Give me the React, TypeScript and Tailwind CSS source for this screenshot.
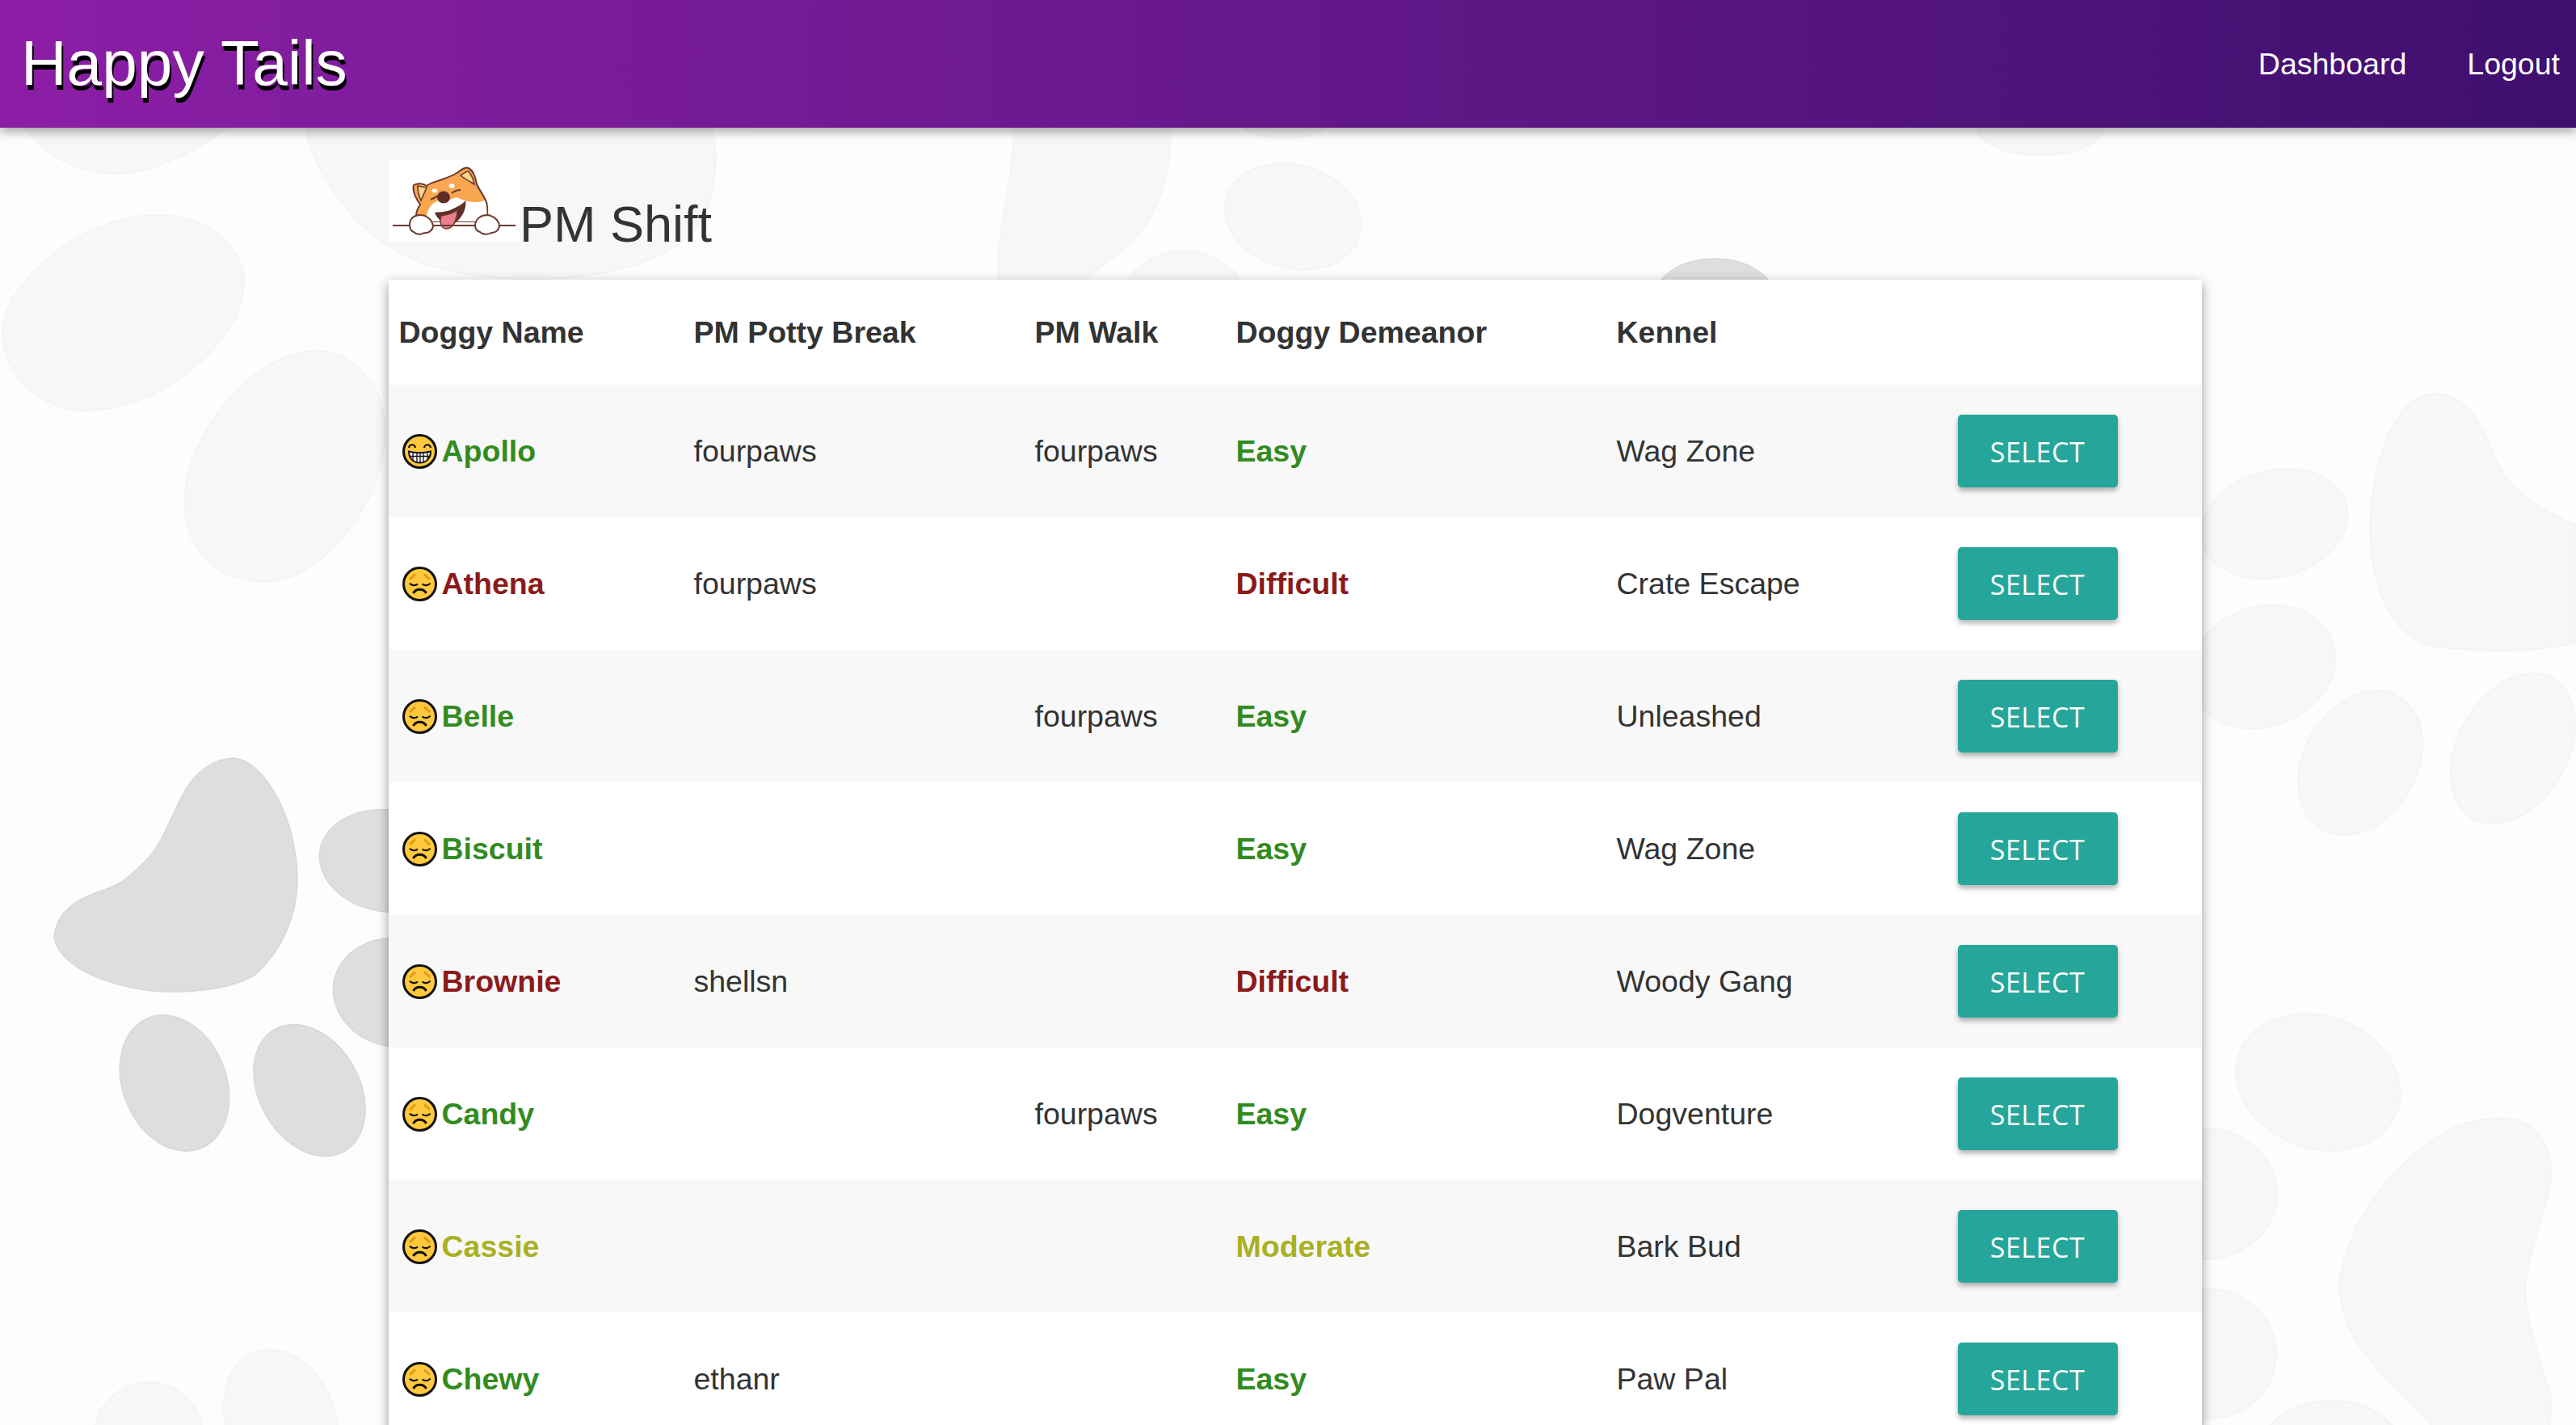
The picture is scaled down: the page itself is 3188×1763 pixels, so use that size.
import React from "react";

type Row = { name: string; potty: string; walk: string; demeanor: "Easy" | "Difficult" | "Moderate"; kennel: string; happy?: boolean };

const rows: Row[] = [
  { name: "Apollo", potty: "fourpaws", walk: "fourpaws", demeanor: "Easy", kennel: "Wag Zone", happy: true },
  { name: "Athena", potty: "fourpaws", walk: "", demeanor: "Difficult", kennel: "Crate Escape" },
  { name: "Belle", potty: "", walk: "fourpaws", demeanor: "Easy", kennel: "Unleashed" },
  { name: "Biscuit", potty: "", walk: "", demeanor: "Easy", kennel: "Wag Zone" },
  { name: "Brownie", potty: "shellsn", walk: "", demeanor: "Difficult", kennel: "Woody Gang" },
  { name: "Candy", potty: "", walk: "fourpaws", demeanor: "Easy", kennel: "Dogventure" },
  { name: "Cassie", potty: "", walk: "", demeanor: "Moderate", kennel: "Bark Bud" },
  { name: "Chewy", potty: "ethanr", walk: "", demeanor: "Easy", kennel: "Paw Pal" },
];

const tone: Record<Row["demeanor"], string> = {
  Easy: "text-[#338b1f]",
  Difficult: "text-[#8b1a1a]",
  Moderate: "text-[#a8b023]",
};

function Emoji({ happy }: { happy?: boolean }) {
  return (
    <svg viewBox="0 0 43 43" className="w-[43px] h-[43px] shrink-0 mr-[6px]">
      <circle cx="21.5" cy="21.5" r="20" fill="#ffc83d" stroke="#111" strokeWidth="3" />
      {happy ? (
        <g>
          <path d="M8 17c1-5 7-5 8 0M27 17c1-5 7-5 8 0" fill="none" stroke="#111" strokeWidth="2.2" />
          <path d="M8 21.5c8 2 19 2 27 0c0 9-6 14-13.500 14S8 30.500 8 21.500z" fill="#fff" stroke="#111" strokeWidth="2" />
          <path d="M13 23v10M18 24v11M22 24v12M26 24v11M31 23v9M9 27.500h25" stroke="#111" strokeWidth="1.300" fill="none" />
        </g>
      ) : (
        <g>
          <path d="M9 16L16 9.500M34 16L27 9.500" stroke="#e0991c" strokeWidth="3" fill="none" />
          <path d="M9 20.500c2 3 7 3.500 10 1M24.500 21.500c3 2.500 8 2 10-1" stroke="#111" strokeWidth="2.200" fill="none" />
          <path d="M13.500 33c3-6.500 13-6.500 16 0" stroke="#111" strokeWidth="3" fill="none" />
        </g>
      )}
    </svg>
  );
}

function Dog() {
  const o = "#6b3a2e";
  return (
    <svg viewBox="0 0 162 101" className="inline-block align-baseline w-[162px] h-[101px] bg-white">
      <path d="M34 70C34 60 38 58 39 55C34 48 29 38 31 31C36 28 43 29 47 32C53 27 62 26 66 24C72 22 80 19 86 15C90 12 95 8 99 10C105 13 108 24 109 30C112 37 118 44 121 52C123 60 122 68 122 76L36 76Z" fill="#f9a650" stroke={o} strokeWidth="2" />
      <path d="M36 32L47 34L40 50C37 44 36 38 36 32ZM89 19C93 16 96 14 99 14C102 18 105 24 106 30C101 27 94 23 89 19Z" fill="#fbd58c" stroke={o} strokeWidth="1.600" />
      <path d="M47 76C46 62 52 54 62 50C68 54 78 48 84 46C96 52 108 54 119 50C122 58 122 68 121 76Z" fill="#fff" />
      <ellipse cx="57" cy="38" rx="3.500" ry="2.500" fill="#fff" />
      <ellipse cx="78" cy="32" rx="3.500" ry="2.800" fill="#fff" />
      <path d="M52 49C55 47 58 47 61 44M78 41C82 38 86 37 89 37" stroke={o} strokeWidth="2" fill="none" />
      <ellipse cx="68" cy="46" rx="8" ry="7.500" fill="#5e2f27" />
      <path d="M57 65C62 64 68 65 76 62C84 58 92 55 95 50C97 60 90 74 80 79C71 82 60 74 57 65Z" fill="#5e2f27" />
      <path d="M65 69C72 68 79 66 85 62C85 70 82 84 72 85C64 85 63 76 65 69Z" fill="#ec7f8d" stroke={o} strokeWidth="1.500" />
      <path d="M5 81H157" stroke={o} strokeWidth="2" />
      <path d="M26 80C26 72 32 68 39 68C47 68 54 74 55 82C54 88 48 91 44 90C40 93 34 92 31 89C28 88 26 85 26 80Z" fill="#fff" stroke={o} strokeWidth="2" />
      <path d="M107 80C108 72 115 68 122 68C130 69 137 75 137 82C136 88 131 90 127 90C122 93 116 92 113 89C109 88 107 85 107 80Z" fill="#fff" stroke={o} strokeWidth="2" />
    </svg>
  );
}

function Paws() {
  const faint = "#f7f7f7";
  const dark = "#dedede";
  return (
    <svg viewBox="0 0 3188 1763" className="absolute inset-0 w-[3188px] h-[1763px]">
      <g fill={faint} stroke="#f4f4f4" strokeWidth="2">
        <path d="M25 150C50 190 95 215 140 215C190 215 250 185 290 150Z" />
        <path d="M3 410C5 350 100 266 193 266C260 266 302 305 302 349C302 420 200 508 107 508C50 508 3 465 3 410Z" />
        <path d="M228 621C230 530 320 434 390 434C440 434 477 480 477 533C477 620 400 720 327 720C270 720 228 680 228 621Z" />
        <path d="M377 150H880C890 190 888 250 860 285C820 325 750 345 660 345C570 345 490 330 430 260C395 215 380 180 377 150Z" />
        <path d="M1255 150H1448C1452 220 1430 270 1400 300C1370 325 1345 345 1330 352H1238C1225 310 1255 240 1255 150Z" />
        <ellipse cx="1600" cy="268" rx="86" ry="64" transform="rotate(15 1600 268)" />
        <ellipse cx="1590" cy="150" rx="55" ry="21" />
        <ellipse cx="1465" cy="370" rx="75" ry="59" />
        <ellipse cx="2525" cy="158" rx="78" ry="34" />
        <path d="M3013 487C3050 487 3070 520 3085 560C3100 600 3130 625 3188 650L3188 795C3130 810 3060 805 3010 800C2960 785 2933 730 2933 650C2935 570 2965 487 3013 487Z" />
        <ellipse cx="2815" cy="648" rx="92" ry="66" transform="rotate(-15 2815 648)" />
        <ellipse cx="2800" cy="825" rx="92" ry="74" transform="rotate(-20 2800 825)" />
        <ellipse cx="2921" cy="944" rx="70" ry="95" transform="rotate(30 2921 944)" />
        <ellipse cx="3110" cy="926" rx="68" ry="100" transform="rotate(30 3110 926)" />
        <ellipse cx="2869" cy="1339" rx="104" ry="82" transform="rotate(20 2869 1339)" />
        <ellipse cx="2730" cy="1477" rx="88" ry="81" />
        <ellipse cx="2735" cy="1675" rx="82" ry="80" />
        <path d="M2895 1586C2905 1520 2950 1445 3033 1396C3060 1385 3085 1383 3100 1383C3130 1385 3155 1405 3158 1451C3158 1480 3130 1540 3125 1592C3125 1640 3150 1700 3158 1733L3155 1770H3015C2950 1700 2895 1660 2895 1586Z" />
        <ellipse cx="2885" cy="1790" rx="85" ry="57" />
        <ellipse cx="184" cy="1780" rx="68" ry="70" />
        <ellipse cx="348" cy="1760" rx="68" ry="93" transform="rotate(-20 348 1760)" />
      </g>
      <g fill={dark} stroke="#d8d8d8" strokeWidth="1.500">
        <path d="M67 1159C70 1130 90 1115 120 1104C150 1095 160 1085 180 1065C200 1045 205 1025 225 985C240 955 265 938 290 938C325 940 368 1010 368 1089C368 1130 350 1175 317 1205C290 1222 250 1227 213 1227C150 1227 72 1200 67 1159Z" />
        <ellipse cx="216" cy="1340" rx="64" ry="87" transform="rotate(-22 216 1340)" />
        <ellipse cx="383" cy="1349" rx="62" ry="87" transform="rotate(-30 383 1349)" />
        <ellipse cx="480" cy="1065" rx="85" ry="63" transform="rotate(8 480 1065)" />
        <ellipse cx="490" cy="1228" rx="78" ry="67" transform="rotate(10 490 1228)" />
        <ellipse cx="2122" cy="370" rx="75" ry="50" />
      </g>
    </svg>
  );
}

export default function App() {
  return (
    <div className="relative w-[3188px] h-[1763px] overflow-hidden bg-[#fdfdfd] font-['Liberation_Sans',Arial,sans-serif] text-[#333333]">
      <Paws />
      <header className="relative z-10 h-[158px] flex items-center justify-between pl-[26px] pr-[20px] bg-gradient-to-r from-[#8c1ea6] to-[#3f0f6e] shadow-[0_5px_12px_rgba(0,0,0,0.35)]">
        <span className="text-[78.4px] text-white [text-shadow:2px_6px_0_#000]">Happy Tails</span>
        <nav className="flex gap-[75px] text-[37.5px] text-white">
          <a>Dashboard</a>
          <a>Logout</a>
        </nav>
      </header>
      <main className="relative ml-[481px] w-[2244px] pt-[40px]">
        <h3 className="text-[63px] leading-none mb-[37px]">
          <Dog />
          PM Shift
        </h3>
        <div className="bg-white shadow-[0_5px_14px_rgba(0,0,0,0.4)]">
          <table className="w-[2244px] table-fixed border-collapse text-[37.5px]">
            <colgroup>
              <col className="w-[365px]" />
              <col className="w-[422px]" />
              <col className="w-[249px]" />
              <col className="w-[471px]" />
              <col className="w-[422px]" />
              <col className="w-[315px]" />
            </colgroup>
            <thead>
              <tr className="h-[130px] text-left font-bold">
                <th className="px-[12.5px]">Doggy Name</th>
                <th className="px-[12.5px]">PM Potty Break</th>
                <th className="px-[12.5px]">PM Walk</th>
                <th className="px-[12.5px]">Doggy Demeanor</th>
                <th className="px-[12.5px]">Kennel</th>
                <th />
              </tr>
            </thead>
            <tbody>
              {rows.map((r, i) => (
                <tr key={r.name} className={i % 2 === 0 ? "h-[164px] bg-[#f8f8f8]" : "h-[164px]"}>
                  <td className="px-[12.5px]">
                    <span className={`flex items-center pl-[4px] font-bold ${tone[r.demeanor]}`}>
                      <Emoji happy={r.happy} />
                      {r.name}
                    </span>
                  </td>
                  <td className="px-[12.5px]">{r.potty}</td>
                  <td className="px-[12.5px]">{r.walk}</td>
                  <td className={`px-[12.5px] font-bold ${tone[r.demeanor]}`}>{r.demeanor}</td>
                  <td className="px-[12.5px]">{r.kennel}</td>
                  <td className="px-[12.5px]">
                    <button className="w-[198px] h-[90px] pt-[2px] rounded-[5px] bg-[#26a69a] text-white text-[34px] tracking-[0.5px] font-['Open_Sans',sans-serif] shadow-[0_4px_6px_rgba(0,0,0,0.3)]">
                      SELECT
                    </button>
                  </td>
                </tr>
              ))}
            </tbody>
          </table>
        </div>
      </main>
    </div>
  );
}
